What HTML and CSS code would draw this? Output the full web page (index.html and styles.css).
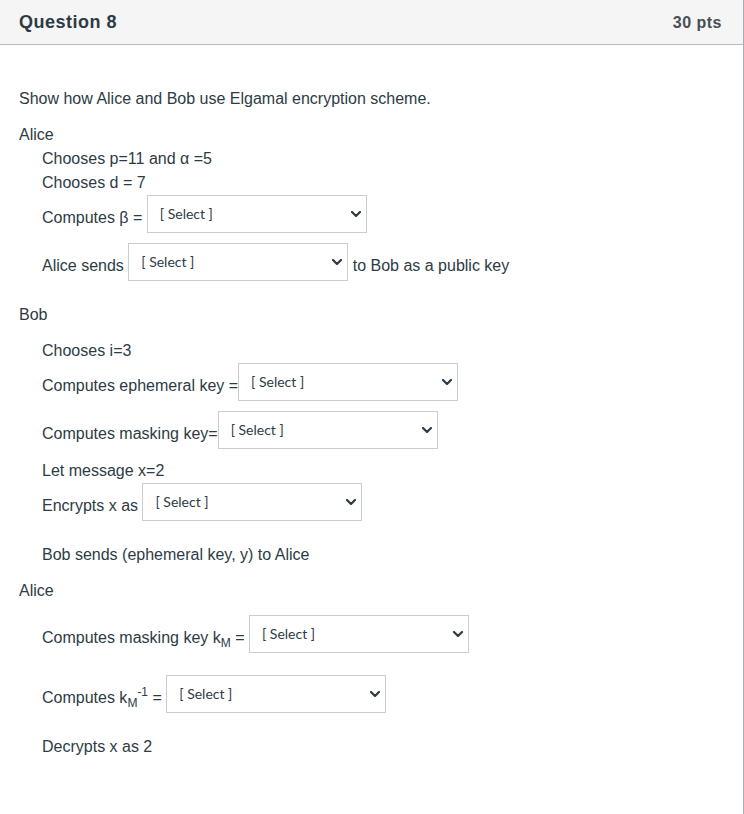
FILE: index.html
```html
<!DOCTYPE html>
<html lang="en">
<head>
<meta charset="utf-8">
<title>Question 8</title>
<link rel="stylesheet" href="styles.css">
</head>
<body>
<div class="question">
  <div class="header">
    <span class="title">Question 8</span>
    <span class="pts">30 pts</span>
  </div>
  <div class="content">
    <div class="line">Show how Alice and Bob use Elgamal encryption scheme.</div>

    <div class="line mt12">Alice</div>
    <div class="line ind">Chooses p=11 and α =5</div>
    <div class="line ind">Chooses d = 7</div>
    <div class="srow ind">
      <span class="lbl">Computes β =&nbsp;</span>
      <span class="sel"><select><option>[ Select ]</option></select><svg class="chev" viewBox="0 0 10 6"><path d="M1 1 L5 5 L9 1"/></svg></span>
    </div>
    <div class="srow ind mt10">
      <span class="lbl">Alice sends&nbsp;</span>
      <span class="sel"><select><option>[ Select ]</option></select><svg class="chev" viewBox="0 0 10 6"><path d="M1 1 L5 5 L9 1"/></svg></span>
      <span class="lbl">&nbsp;to Bob as a public key</span>
    </div>

    <div class="line mt22">Bob</div>
    <div class="line ind mt12">Chooses i=3</div>
    <div class="srow ind">
      <span class="lbl">Computes ephemeral key =</span>
      <span class="sel"><select><option>[ Select ]</option></select><svg class="chev" viewBox="0 0 10 6"><path d="M1 1 L5 5 L9 1"/></svg></span>
    </div>
    <div class="srow ind mt10">
      <span class="lbl">Computes masking key=</span>
      <span class="sel"><select><option>[ Select ]</option></select><svg class="chev" viewBox="0 0 10 6"><path d="M1 1 L5 5 L9 1"/></svg></span>
    </div>
    <div class="line ind mt10">Let message x=2</div>
    <div class="srow ind">
      <span class="lbl">Encrypts x as&nbsp;</span>
      <span class="sel"><select><option>[ Select ]</option></select><svg class="chev" viewBox="0 0 10 6"><path d="M1 1 L5 5 L9 1"/></svg></span>
    </div>
    <div class="line ind mt22">Bob sends (ephemeral key, y) to Alice</div>

    <div class="line mt12">Alice</div>
    <div class="srow ind mt12">
      <span class="lbl">Computes masking key k<sub>M</sub> =&nbsp;</span>
      <span class="sel"><select><option>[ Select ]</option></select><svg class="chev" viewBox="0 0 10 6"><path d="M1 1 L5 5 L9 1"/></svg></span>
    </div>
    <div class="srow ind mt22">
      <span class="lbl">Computes k<sub>M</sub><sup>-1</sup> =&nbsp;</span>
      <span class="sel"><select><option>[ Select ]</option></select><svg class="chev" viewBox="0 0 10 6"><path d="M1 1 L5 5 L9 1"/></svg></span>
    </div>
    <div class="line ind mt22">Decrypts x as 2</div>
  </div>
</div>
</body>
</html>
```

FILE: styles.css
```css
html, body {
  margin: 0;
  padding: 0;
  background: #ffffff;
}

body {
  font-family: "Liberation Sans", Arial, sans-serif;
  color: #2d3b45;
}

.question {
  width: 743px;
  min-height: 814px;
  border-right: 1px solid #a8acaf;
  box-sizing: content-box;
}

.header {
  height: 44px;
  background: #f5f5f5;
  border-bottom: 1px solid #b9bcbf;
  display: flex;
  align-items: center;
  justify-content: space-between;
  padding: 0 21px 0 19px;
}

.title {
  font-size: 18px;
  font-weight: bold;
  letter-spacing: 0.5px;
  color: #2d3b45;
  margin-top: 0;
}

.pts {
  font-size: 16px;
  font-weight: bold;
  letter-spacing: 0.5px;
  color: #464f56;
  margin-top: 1px;
}

.content {
  padding: 42px 19px 0 19px;
  font-size: 16px;
}

.line {
  line-height: 24px;
  height: 24px;
  white-space: nowrap;
}

.ind {
  padding-left: 23px;
}

.srow {
  display: flex;
  align-items: flex-start;
  white-space: nowrap;
}

.lbl {
  line-height: 24px;
  margin-top: 11px;
}

sub, sup {
  line-height: 0;
  font-size: 12px;
}

sub {
  vertical-align: -4px;
}

sup {
  vertical-align: 7px;
}

.sel {
  position: relative;
  display: inline-block;
  width: 220px;
  height: 38px;
}

.sel select {
  appearance: none;
  -webkit-appearance: none;
  width: 220px;
  height: 38px;
  margin: 0;
  padding: 0 30px 2px 12px;
  border: 1px solid #c7cdd1;
  border-radius: 0;
  background: #ffffff;
  font-family: Lato, "Liberation Sans", sans-serif;
  font-size: 14px;
  color: #2d3b45;
  box-sizing: border-box;
}

.chev {
  position: absolute;
  right: 6px;
  top: 16px;
  width: 10px;
  height: 6px;
  fill: none;
  stroke: #2d3b45;
  stroke-width: 2.2;
  stroke-linecap: round;
  stroke-linejoin: round;
  pointer-events: none;
}

.mt10 { margin-top: 10px; }
.mt12 { margin-top: 12px; }
.mt22 { margin-top: 22px; }
```
